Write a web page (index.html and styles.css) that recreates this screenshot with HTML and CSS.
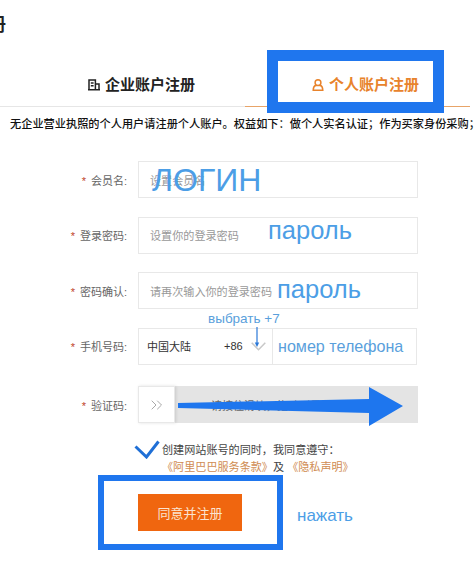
FILE: index.html
```html
<!DOCTYPE html>
<html lang="zh">
<head>
<meta charset="utf-8">
<title>个人账户注册</title>
<link rel="stylesheet" href="styles.css">
</head>
<body>
<main class="page">
  <header class="title-bar"><h1 class="title">册</h1></header>

  <nav class="tabs">
    <div class="tab tab-company">
      <svg class="tab-icon" viewBox="0 0 12 12" aria-hidden="true"><path d="M1 1h6.400v9.800H1zM7.400 5h3.600v5.800H7.400M2.800 4h2.800M2.800 6.800h2.800M0 10.800h12" fill="none" stroke="currentColor" stroke-width="1.500"/></svg>
      <span>企业账户注册</span>
    </div>
    <div class="tab tab-person">
      <svg class="tab-icon" viewBox="0 0 12 12" aria-hidden="true"><path d="M6 .8a2.900 2.900 0 0 1 0 5.800a2.900 2.900 0 0 1 0-5.800zM3.800 6.200C2 7 1.200 8.300 1.200 11.200h9.600c0-2.900-.8-4.200-2.600-5" fill="none" stroke="currentColor" stroke-width="1.500"/></svg>
      <span>个人账户注册</span>
    </div>
    <div class="mark-box mark-tab"></div>
  </nav>

  <p class="notice">无企业营业执照的个人用户请注册个人账户。权益如下：做个人实名认证；作为买家身份采购；</p>

  <form class="form">
    <div class="row">
      <label class="label"><i class="star">*</i>会员名:</label>
      <div class="field"><span class="hint">设置会员名</span></div>
      <span class="note note-login">логин</span>
    </div>
    <div class="row">
      <label class="label"><i class="star">*</i>登录密码:</label>
      <div class="field"><span class="hint">设置你的登录密码</span></div>
      <span class="note note-pass1">пароль</span>
    </div>
    <div class="row">
      <label class="label"><i class="star">*</i>密码确认:</label>
      <div class="field"><span class="hint">请再次输入你的登录密码</span></div>
      <span class="note note-pass2">пароль</span>
    </div>
    <div class="row">
      <label class="label"><i class="star">*</i>手机号码:</label>
      <div class="phone">
        <div class="phone-select">
          <span class="region">中国大陆</span>
          <span class="code">+86</span>
          <svg class="chevron" viewBox="0 0 15 9" aria-hidden="true"><path d="M.7.7l6.800 7 6.800-7" fill="none" stroke="#c8c8c8" stroke-width="1.500"/></svg>
        </div>
        <div class="phone-input"></div>
      </div>
      <span class="note note-choose">выбрать +7</span>
      <svg class="down-arrow" viewBox="0 0 6 20" aria-hidden="true"><path d="M3 0v17" stroke="#2a78d8" stroke-width="1.200"/><path d="M.8 15.500L3 20l2.200-4.500z" fill="#2a78d8"/></svg>
      <span class="note note-phone">номер телефона</span>
    </div>
    <div class="row row-slider">
      <label class="label"><i class="star">*</i>验证码:</label>
      <div class="slider">
        <div class="knob">
          <svg class="knob-icon" viewBox="0 0 12 10" aria-hidden="true"><path d="M.7.7l4.300 4.300-4.300 4.300M6.200.7l4.300 4.300-4.300 4.300" fill="none" stroke="#a8a8a8" stroke-width="1"/></svg>
        </div>
        <span class="slider-text">请按住滑块，拖动到最右边</span>
      </div>
      <svg class="big-arrow" viewBox="0 0 225 39" aria-hidden="true"><path d="M0 16 L191 12 L191 0 L225 19 L191 39 L191 26 L0 21z" fill="#1e76ee"/></svg>
    </div>

    <div class="agree">
      <svg class="check" viewBox="0 0 26 19" aria-hidden="true"><path d="M1.500 6.500L12.500 17 24.500 1.500" fill="none" stroke="#1f6fd6" stroke-width="3"/></svg>
      <div class="agree-text">
        <p class="agree-line">创建网站账号的同时，我同意遵守：</p>
        <p class="agree-line agree-links"><a class="link">《阿里巴巴服务条款》</a>及 <a class="link">《隐私声明》</a></p>
      </div>
    </div>

    <div class="submit-row">
      <button class="submit" type="button">同意并注册</button>
      <span class="note-press">нажать</span>
      <div class="mark-box mark-submit"></div>
    </div>
  </form>
</main>
</body>
</html>
```

FILE: styles.css
```css
* { box-sizing: border-box; }

html, body {
  margin: 0;
  height: 100%;
  overflow: hidden;
  background: #fff;
}

body {
  font-family: "Liberation Sans", "Noto Sans CJK SC", sans-serif;
  color: #333;
}

.page {
  width: 474px;
  height: 577px;
  overflow: hidden;
  position: relative;
}

.title-bar {
  height: 50px;
  padding-top: 14px;
}

.title {
  margin: 0 0 0 -12px;
  font-size: 18px;
  line-height: 22px;
  font-weight: 700;
  color: #222;
}

.tabs {
  position: relative;
  display: flex;
  height: 57px;
}

.tab {
  display: flex;
  align-items: center;
  gap: 5px;
  height: 57px;
  padding-top: 13px;
  font-size: 15px;
  line-height: 20px;
  font-weight: 700;
  border-bottom: 1px solid #e6e6e6;
}

.tab-company {
  width: 245px;
  padding-left: 88px;
  color: #222;
}

.tab-person {
  width: 225px;
  padding-left: 67px;
  color: #e8832c;
  border-bottom-color: #e8a468;
}

.tab-icon {
  width: 12px;
  height: 12px;
  flex: none;
}

.mark-box {
  position: absolute;
  border-style: solid;
  border-color: #1f76ee;
}

.mark-tab {
  left: 267px;
  top: 0;
  width: 177px;
  height: 63px;
  border-width: 11px;
}

.notice {
  margin: 9px 0 0;
  padding-left: 10px;
  width: 474px;
  font-size: 11.200px;
  line-height: 16px;
  font-weight: 500;
  color: #111;
  white-space: nowrap;
  overflow: hidden;
}

.form {
  display: flex;
  flex-direction: column;
  margin-top: 29px;
}

.row {
  position: relative;
  display: flex;
  align-items: center;
  gap: 11px;
  height: 37px;
  margin-bottom: 18.500px;
}

.row-slider {
  margin-top: 3px;
  margin-bottom: 0;
}

.label {
  width: 127px;
  text-align: right;
  font-size: 11px;
  color: #666;
}

.star {
  margin-right: 5px;
  font-style: normal;
  color: #c0452a;
}

.field {
  display: flex;
  align-items: center;
  width: 280px;
  height: 37px;
  padding-left: 11px;
  border: 1px solid #e8e8e8;
}

.hint {
  font-size: 11.100px;
  color: #999;
}

.note {
  position: absolute;
  white-space: nowrap;
  color: #4c9ee6;
  line-height: 1;
}

.note-login {
  left: 152px;
  top: 3px;
  font-size: 32px;
  text-transform: uppercase;
}

.note-pass1 {
  left: 268px;
  top: 1px;
  font-size: 25.500px;
}

.note-pass2 {
  left: 277px;
  top: 5px;
  font-size: 25.500px;
}

.phone {
  display: flex;
  width: 279px;
  height: 37px;
}

.phone-select {
  display: flex;
  align-items: center;
  width: 135px;
  padding-left: 8px;
  border: 1px solid #e8e8e8;
  font-size: 11px;
  color: #333;
}

.region {
  width: 77px;
}

.code {
  width: 27px;
}

.chevron {
  width: 15px;
  height: 9px;
}

.phone-input {
  flex: 1;
  border: 1px solid #e8e8e8;
  border-left: 0;
}

.note-choose {
  left: 208px;
  top: -16px;
  font-size: 13.500px;
  color: #5a9fdc;
}

.down-arrow {
  position: absolute;
  left: 254px;
  top: -1px;
  width: 6px;
  height: 20px;
}

.note-phone {
  left: 278px;
  top: 10px;
  font-size: 16.100px;
  color: #5a9fdc;
}

.slider {
  position: relative;
  display: flex;
  align-items: center;
  width: 280px;
  height: 37px;
  background: #e4e4e4;
}

.knob {
  display: flex;
  align-items: center;
  justify-content: center;
  width: 37px;
  height: 37px;
  background: #fff;
  border: 1px solid #e8e8e8;
  box-shadow: 1px 0 3px rgba(0, 0, 0, .12);
}

.knob-icon {
  width: 12px;
  height: 10px;
}

.slider-text {
  margin-left: 36px;
  font-size: 11px;
  color: #666;
  white-space: nowrap;
}

.big-arrow {
  position: absolute;
  left: 178px;
  top: 1px;
  width: 225px;
  height: 39px;
}

.agree {
  position: relative;
  display: flex;
  margin-top: 19px;
  padding-left: 162px;
}

.check {
  position: absolute;
  left: 134px;
  top: -2px;
  width: 26px;
  height: 19px;
}

.agree-line {
  margin: 0;
  font-size: 11.100px;
  line-height: 17px;
  color: #444;
  white-space: nowrap;
}

.agree-links {
  margin-left: 0;
}

.link {
  color: #d08c52;
}

.submit-row {
  position: relative;
  display: flex;
  align-items: center;
  margin-top: 18px;
  padding-left: 138px;
  height: 37px;
}

.submit {
  width: 104px;
  height: 37px;
  border: 0;
  background: #f0660f;
  color: #fbe3d0;
  font-family: inherit;
  font-size: 13px;
}

.note-press {
  margin-left: 55px;
  margin-top: 7px;
  font-size: 17px;
  color: #4c9ee6;
}

.mark-submit {
  left: 98px;
  top: -19px;
  width: 185px;
  height: 75px;
  border-width: 6px;
}
```
